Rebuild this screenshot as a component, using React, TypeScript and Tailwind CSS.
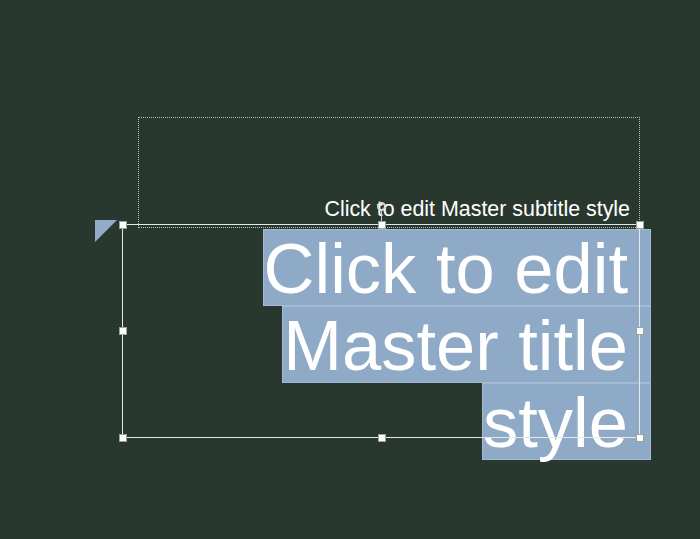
import React from 'react';

// slide master editor: title placeholder selected, subtitle box above
const handles: [number, number][] = [
  [122, 224], [381, 224], [639, 224],
  [122, 330], [639, 330],
  [122, 437], [381, 437], [639, 437],
];

const titleLines = ['Click to edit', 'Master title', 'style'];

const App = () => {
  return (
    <div
      className="relative w-[700px] h-[539px] overflow-hidden bg-[#29382f]"
      style={{ fontFamily: '"Liberation Sans", Arial, sans-serif' }}
    >
      {/* subtitle placeholder (dotted outline) */}
      <div className="absolute left-[138px] top-[117px] w-[502px] h-[111px] border border-dotted border-[#b9c1bc]" />
      <div className="absolute right-[70px] top-[197px] text-[21.4px] leading-[24px] text-white whitespace-nowrap">
        Click to edit Master subtitle style
      </div>

      {/* title text with selection highlight */}
      <div className="absolute left-[260px] top-[229px] w-[391px] flex flex-col items-end">
        {titleLines.map((line) => (
          <div
            key={line}
            className="h-[77px] leading-[77px] text-[70.5px] text-white whitespace-nowrap pr-[22px] bg-[#8eaac6] border border-[#a3bbd5]"
          >
            {line}
          </div>
        ))}
      </div>

      {/* corner marker */}
      <svg className="absolute left-[95px] top-[220px]" width="22" height="22" viewBox="0 0 22 22">
        <polygon points="0,0 22,0 0,22" fill="#94aac8" />
      </svg>

      {/* selection frame */}
      <div className="absolute left-[122px] top-[224px] w-[518px] h-[214px] border border-[#e4e8e6]" />

      {/* rotate handle */}
      <div className="absolute left-[381px] top-[210px] w-px h-[14px] bg-[#c9cfcc]" />
      <div className="absolute left-[377px] top-[202px] w-[9px] h-[9px] rounded-full border-2 border-[#d8dcda]" />

      {handles.map(([x, y]) => (
        <div
          key={`${x}-${y}`}
          className="absolute w-[8px] h-[8px] bg-white border border-[#9aa29e]"
          style={{ left: x - 3.5, top: y - 3.5 }}
        />
      ))}
    </div>
  );
};

export default App;
